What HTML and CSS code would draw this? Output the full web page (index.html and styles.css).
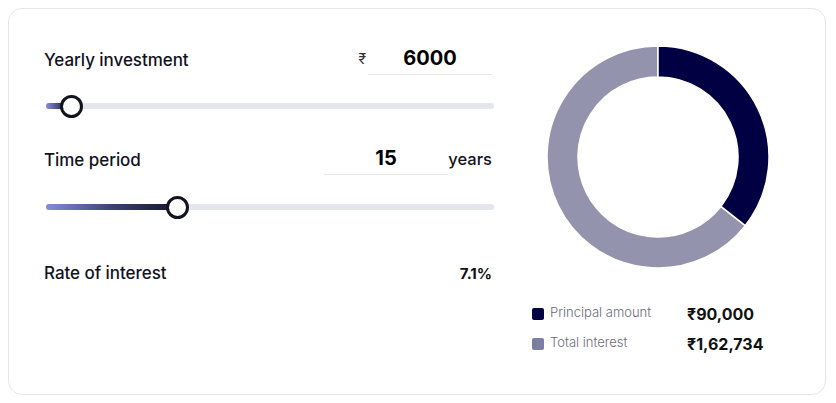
FILE: index.html
```html
<!DOCTYPE html>
<html lang="en">
<head>
<meta charset="utf-8">
<link rel="stylesheet" href="styles.css">
</head>
<body>
<div class="card">
  <div class="left">
    <div class="row">
      <span class="label">Yearly investment</span>
      <span class="spacer"></span>
      <span class="rupee">₹</span>
      <span class="inbox">6000</span>
    </div>
    <div class="slider s1">
      <div class="track"></div>
      <div class="fill" style="width: 28px"></div>
      <div class="thumb" style="left: 16px"></div>
    </div>
    <div class="row row2">
      <span class="label">Time period</span>
      <span class="spacer"></span>
      <span class="inbox">15</span>
      <span class="unit">years</span>
    </div>
    <div class="slider s2">
      <div class="track"></div>
      <div class="fill" style="width: 134px"></div>
      <div class="thumb" style="left: 122px"></div>
    </div>
    <div class="rate">
      <span class="label">Rate of interest</span>
      <span class="rate-val">7.1%</span>
    </div>
  </div>
  <div class="right">
    <svg class="donut" width="222" height="222" viewBox="0 0 222 222">
      <path class="seg-interest" d="M198.27,179.60 A111,111 0 1 1 111,0 L111,31 A80,80 0 1 0 173.90,160.44 Z"/>
      <path class="seg-principal" d="M111,0 A111,111 0 0 1 198.27,179.60 L173.90,160.44 A80,80 0 0 0 111,31 Z"/>
    </svg>
    <div class="legend">
      <div class="lrow">
        <span class="sq sq-p"></span>
        <span class="lname">Principal amount</span>
        <span class="lval">₹90,000</span>
      </div>
      <div class="lrow">
        <span class="sq sq-i"></span>
        <span class="lname">Total interest</span>
        <span class="lval">₹1,62,734</span>
      </div>
    </div>
  </div>
</div>
</body>
</html>
```

FILE: styles.css
```css
* { box-sizing: border-box; }
html, body { margin: 0; padding: 0; background: #ffffff; }
body {
  padding: 8px 10px 8px 8px;
  font-family: Inter, "Noto Sans", "DejaVu Sans", sans-serif;
  color: #101020;
}
.card {
  width: 818px;
  height: 387px;
  border: 1px solid #e4e6ea;
  border-radius: 14px;
  display: flex;
}
.left {
  width: 486px;
  padding: 35px 0 0 35px;
}
.row {
  display: flex;
  align-items: center;
  width: 448px;
  height: 31px;
}
.spacer { flex: 1; }
.label {
  font-size: 17px;
  font-weight: 500;
  color: #12121e;
  letter-spacing: -0.05px;
}
.rupee {
  font-size: 14px;
  color: #333;
  margin-right: 2px;
  margin-top: -2px;
}
.inbox {
  width: 124px;
  height: 31px;
  border-bottom: 1px solid #e5e7eb;
  text-align: center;
  font-size: 20px;
  font-weight: 700;
  line-height: 29px;
  color: #000;
}
.unit {
  width: 44px;
  text-align: right;
  font-size: 16.5px;
  font-weight: 500;
  color: #12121e;
  margin-top: -2px;
}
.slider {
  position: relative;
  height: 22px;
  width: 450px;
}
.s1 { margin-top: 20px; }
.row2 { margin-top: 27px; }
.s2 { margin-top: 21px; }
.track {
  position: absolute;
  left: 2px;
  right: 0;
  top: 8px;
  height: 6px;
  border-radius: 3px;
  background: #e3e6ea;
}
.fill {
  position: absolute;
  left: 2px;
  top: 8px;
  height: 6px;
  border-radius: 3px 0 0 3px;
  background: linear-gradient(90deg, #858ddd 0%, #3c4070 50%, #11132a 100%);
}
.thumb {
  position: absolute;
  top: -0.5px;
  width: 23px;
  height: 23px;
  border-radius: 50%;
  border: 3.5px solid #12131f;
  background: #fff;
}
.rate {
  display: flex;
  justify-content: space-between;
  align-items: center;
  width: 448px;
  height: 20px;
  margin-top: 45px;
}
.rate-val {
  font-size: 15px;
  font-weight: 700;
  color: #111;
}
.right {
  padding: 37px 0 0 37px;
  display: flex;
  flex-direction: column;
}
.donut {
  display: block;
  margin-left: 15px;
}
.seg-principal { fill: #000042; stroke: #fff; stroke-width: 1.5; }
.seg-interest { fill: #9393ae; stroke: #fff; stroke-width: 1.5; }
.legend {
  margin-top: 31px;
  display: flex;
  flex-direction: column;
}
.lrow {
  display: flex;
  align-items: center;
  height: 30px;
}
.sq {
  width: 12px;
  height: 12px;
  border-radius: 2px;
  margin-right: 6px;
}
.sq-p { background: #000042; }
.sq-i { background: #7e7ea2; }
.lname {
  width: 137px;
  font-size: 13px;
  font-weight: 300;
  color: #6b6b78;
  margin-top: -4px;
}
.lval {
  font-size: 16px;
  font-weight: 700;
  color: #111;
}
```
